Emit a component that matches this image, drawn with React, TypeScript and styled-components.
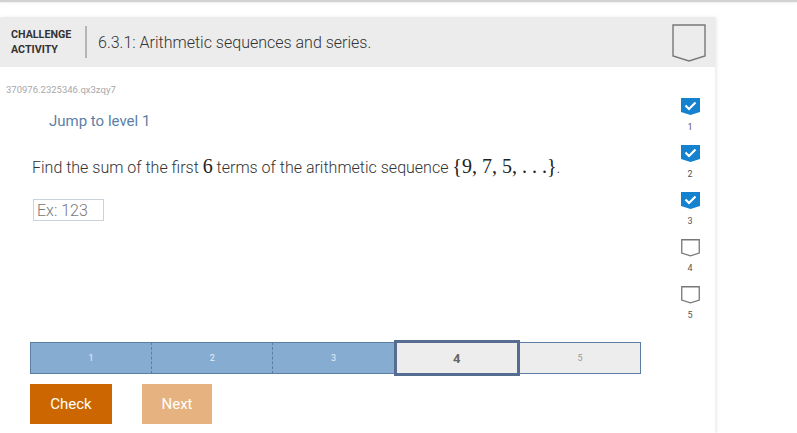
import React from "react";
import styled, { createGlobalStyle } from "styled-components";

const GlobalStyle = createGlobalStyle`
  body {
    margin: 0;
    background: #fff;
    font-family: Roboto, "Liberation Sans", sans-serif;
    color: #333;
  }
`;

const TopEdge = styled.div`
  height: 2px;
  background: #d2d2d2;
  box-shadow: 0 1px 2px rgba(0, 0, 0, 0.08);
`;

const Card = styled.section`
  width: 715px;
  margin-top: 15px;
  background: #fff;
  box-shadow: 2px 0 3px rgba(0, 0, 0, 0.08);
`;

const Header = styled.header`
  height: 50px;
  background: #ececec;
  display: flex;
  align-items: center;
  padding: 0 9px 0 11px;
`;

const Label = styled.div`
  width: 70px;
  font-size: 10.7px;
  font-weight: 700;
  line-height: 15px;
  color: #333;
`;

const Divider = styled.div`
  width: 2px;
  height: 32px;
  margin-left: 4px;
  background: #b5b5b5;
`;

const Title = styled.h1`
  margin: 0 0 0 11px;
  font-size: 16px;
  font-weight: 300;
  color: #333;
`;

const HeaderShield = styled.svg`
  margin-left: auto;
  width: 34px;
  height: 38px;
  margin-top: 2px;
`;

const Body = styled.div`
  display: flex;
  height: 366px;
`;

const Main = styled.div`
  flex: 1;
  padding-top: 17px;
`;

const Ident = styled.div`
  padding-left: 6px;
  font-size: 9.5px;
  line-height: 12px;
  color: #a8a8a8;
`;

const JumpLink = styled.div`
  margin: 16px 0 0 49px;
  font-size: 15px;
  line-height: 18px;
  color: #5a7fa8;
`;

const Question = styled.p`
  margin: 25px 0 0 32px;
  font-size: 16px;
  font-weight: 300;
  line-height: 22px;
  color: #333;
`;

const Math = styled.span`
  font-family: "Liberation Serif", "DejaVu Serif", serif;
  font-size: 20px;
  font-weight: 400;
  color: #222;
`;

const Answer = styled.input`
  display: block;
  box-sizing: border-box;
  margin: 20px 0 0 33px;
  width: 71px;
  height: 22px;
  padding: 0 3px;
  border: 1px solid #c8d2d8;
  font-family: Roboto, "Liberation Sans", sans-serif;
  font-size: 16px;
  font-weight: 300;
  outline: none;
  &::placeholder {
    color: #777;
  }
`;

const Progress = styled.div`
  display: flex;
  margin: 121px 0 0 30px;
  width: 611px;
  height: 32px;
  align-items: center;
`;

type SegState = "done" | "current" | "todo";

const borderFor = (state: SegState) =>
  state === "current" ? "3px solid #566d91" : "1px solid #5b7ca3";

const Segment = styled.div<{ $state: SegState; $dashed?: boolean }>`
  flex: 1;
  box-sizing: border-box;
  display: flex;
  align-items: center;
  justify-content: center;
  height: ${(p) => (p.$state === "current" ? "36px" : "32px")};
  background: ${(p) => (p.$state === "done" ? "#87acd2" : "#ededed")};
  border: ${(p) => borderFor(p.$state)};
  border-left: ${(p) =>
    p.$state === "todo" ? "none" : p.$dashed ? "1px dashed #5b7ca3" : borderFor(p.$state)};
  border-right: ${(p) => (p.$state === "done" ? "none" : borderFor(p.$state))};
  font-size: ${(p) => (p.$state === "current" ? "13px" : "9px")};
  font-weight: ${(p) => (p.$state === "current" ? 700 : 400)};
  color: ${(p) => (p.$state === "done" ? "#e8eef6" : p.$state === "current" ? "#666" : "#9a9a9a")};
`;

const Buttons = styled.div`
  display: flex;
  gap: 30px;
  margin: 10px 0 0 30px;
`;

const Button = styled.button<{ $disabled?: boolean; $width: number }>`
  width: ${(p) => p.$width}px;
  height: 40px;
  padding: 0;
  border: none;
  background: ${(p) => (p.$disabled ? "#e6b27f" : "#cc6600")};
  color: #fff;
  font-family: Roboto, "Liberation Sans", sans-serif;
  font-size: 15px;
  cursor: ${(p) => (p.$disabled ? "default" : "pointer")};
`;

const Levels = styled.div`
  width: 40px;
  margin-right: 5px;
  padding-top: 31px;
  display: flex;
  flex-direction: column;
`;

const Level = styled.div`
  height: 47px;
  display: flex;
  flex-direction: column;
  align-items: center;
`;

const LevelNum = styled.span`
  margin-top: 6px;
  font-size: 9px;
  color: #555;
`;

const LevelIcon = ({ done }: { done: boolean }) =>
  done ? (
    <svg width="19" height="18" viewBox="0 0 19 18">
      <path d="M0 0 H19 V14 L9.5 17 L0 14 Z" fill="#1582d0" />
      <path d="M4.5 7.5 L8 11 L14.5 4.5" stroke="#fff" strokeWidth="2.2" fill="none" />
    </svg>
  ) : (
    <svg width="19" height="18" viewBox="0 0 19 18">
      <path d="M0.75 0.75 H18.25 V14 L9.5 16.8 L0.75 14 Z" stroke="#777" strokeWidth="1.3" fill="#fff" />
    </svg>
  );

const levels = [true, true, true, false, false];

export default function App() {
  return (
    <>
      <GlobalStyle />
      <TopEdge />
      <Card>
        <Header>
          <Label>
            CHALLENGE
            <br />
            ACTIVITY
          </Label>
          <Divider />
          <Title>6.3.1: Arithmetic sequences and series.</Title>
          <HeaderShield viewBox="0 0 34 38">
            <path d="M1 1 H33 V32 L17 37 L1 32 Z" stroke="#777" strokeWidth="1.4" fill="none" />
          </HeaderShield>
        </Header>
        <Body>
          <Main>
            <Ident>370976.2325346.qx3zqy7</Ident>
            <JumpLink>Jump to level 1</JumpLink>
            <Question>
              Find the sum of the first <Math>6</Math> terms of the arithmetic sequence{" "}
              <Math>{"{9, 7, 5, . . .}"}</Math>.
            </Question>
            <Answer placeholder="Ex: 123" />
            <Progress>
              <Segment $state="done">1</Segment>
              <Segment $state="done" $dashed>2</Segment>
              <Segment $state="done" $dashed>3</Segment>
              <Segment $state="current">4</Segment>
              <Segment $state="todo">5</Segment>
            </Progress>
            <Buttons>
              <Button $width={82}>Check</Button>
              <Button $width={70} $disabled>
                Next
              </Button>
            </Buttons>
          </Main>
          <Levels>
            {levels.map((done, i) => (
              <Level key={i}>
                <LevelIcon done={done} />
                <LevelNum>{i + 1}</LevelNum>
              </Level>
            ))}
          </Levels>
        </Body>
      </Card>
    </>
  );
}
